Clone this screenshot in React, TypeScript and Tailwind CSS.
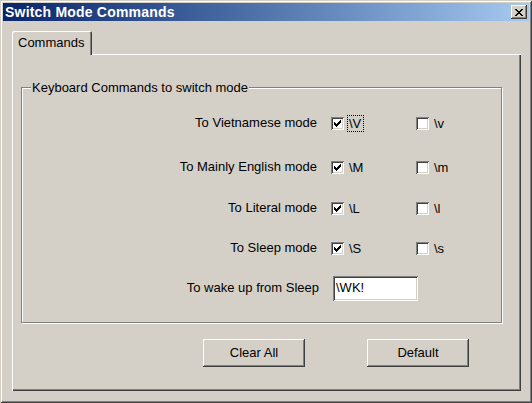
const xPixels: [number, number, number][] = [
  [0, 0, 2], [6, 0, 2],
  [1, 1, 2], [5, 1, 2],
  [2, 2, 4],
  [3, 3, 2],
  [2, 4, 4],
  [1, 5, 2], [5, 5, 2],
  [0, 6, 2], [6, 6, 2],
];

function CloseButton() {
  return (
    <div className="flex h-[14px] w-[16px] items-center justify-center bg-[#d4d0c8] shadow-[inset_-1px_-1px_0_#404040,inset_1px_1px_0_#fff,inset_-2px_-2px_0_#808080]">
      <svg width="8" height="7" viewBox="0 0 8 7" shapeRendering="crispEdges">
        {xPixels.map(([x, y, w], i) => (
          <rect key={i} x={x} y={y} width={w} height={1} fill="#000" />
        ))}
      </svg>
    </div>
  );
}

function Check({ checked }: { checked: boolean }) {
  return (
    <span className="relative inline-block h-[13px] w-[13px] shrink-0 bg-white shadow-[inset_1px_1px_0_#808080,inset_-1px_-1px_0_#fff,inset_2px_2px_0_#404040,inset_-2px_-2px_0_#d4d0c8]">
      {checked && (
        <svg className="absolute left-[2px] top-[2px]" width="9" height="9" viewBox="0 0 9 9" shapeRendering="crispEdges">
          <path d="M1 3h1v1h1v1h1v-1h1v-1h1v-1h1v-1h1v3h-1v1h-1v1h-1v1h-1v1h-1v-1h-1v-1h-1z" fill="#000" />
        </svg>
      )}
    </span>
  );
}

function Option({ label, checked, focused }: { label: string; checked: boolean; focused?: boolean }) {
  return (
    <div className="flex w-[85px] items-center">
      <Check checked={checked} />
      <span
        className={
          focused
            ? "ml-[3px] border border-dotted border-black pl-[1px] pr-[2px] leading-[15px]"
            : "ml-[3px] border border-transparent pl-[1px] pr-[2px] leading-[15px]"
        }
      >
        {label}
      </span>
    </div>
  );
}

function Button({ children }: { children: React.ReactNode }) {
  return (
    <div className="flex h-[28px] w-[102px] items-center justify-center bg-[#d4d0c8] shadow-[inset_-1px_-1px_0_#404040,inset_1px_1px_0_#fff,inset_-2px_-2px_0_#808080]">
      {children}
    </div>
  );
}

const rows = [
  { label: "To Vietnamese mode", on: "\\V", off: "\\v", gap: "mt-[15px]" },
  { label: "To Mainly English mode", on: "\\M", off: "\\m", gap: "mt-[4px]" },
  { label: "To Literal mode", on: "\\L", off: "\\l", gap: "mt-[1px]" },
  { label: "To Sleep mode", on: "\\S", off: "\\s", gap: "" },
];

export default function App() {
  return (
    <div className="h-[403px] w-[532px] bg-[#d4d0c8] p-[3px] font-['Liberation_Sans',Arial,sans-serif] text-[13px] text-black shadow-[inset_1px_1px_0_#d4d0c8,inset_-1px_-1px_0_#404040,inset_2px_2px_0_#fff,inset_-2px_-2px_0_#808080]">
      {/* Title bar */}
      <div className="flex h-[18px] items-center justify-between bg-gradient-to-r from-[#0a246a] to-[#a6caf0] pl-[2px] pr-[2px]">
        <span className="text-[14px] font-bold leading-[18px] tracking-[0.2px] text-white">Switch Mode Commands</span>
        <CloseButton />
      </div>

      {/* Body */}
      <div className="ml-[9px] mt-[10px]">
        {/* Tab strip */}
        <div className="relative z-10 -mb-[1px] flex h-[24px] w-[80px] items-center rounded-t-[2px] bg-[#d4d0c8] pl-[6px] shadow-[inset_1px_1px_0_#fff,inset_-1px_0_0_#404040,inset_-2px_0_0_#808080]">
          Commands
        </div>

        {/* Tab panel */}
        <div className="h-[337px] w-[509px] pl-[1px] pt-[1px] shadow-[inset_1px_1px_0_#fff,inset_-1px_-1px_0_#404040,inset_-2px_-2px_0_#808080]">
          {/* Group box */}
          <div className="relative ml-[8px] mt-[32px] h-[236px] w-[481px] border border-[#808080] shadow-[inset_1px_1px_0_#fff,1px_1px_0_#fff]">
            <span className="absolute -top-[8px] left-[9px] bg-[#d4d0c8] px-[1px] leading-[15px]">
              Keyboard Commands to switch mode
            </span>

            {rows.map((r) => (
              <div key={r.label} className={`flex h-[40px] items-center ${r.gap}`}>
                <div className="w-[297px] text-right">{r.label}</div>
                <div className="ml-[14px] flex items-center">
                  <Option label={r.on} checked focused={r.on === "\\V"} />
                  <Option label={r.off} checked={false} />
                </div>
              </div>
            ))}

            <div className="flex h-[40px] items-center">
              <div className="w-[297px] text-right">To wake up from Sleep</div>
              <div className="ml-[14px] flex h-[25px] w-[85px] items-center bg-white pl-[3px] shadow-[inset_1px_1px_0_#808080,inset_-1px_-1px_0_#fff,inset_2px_2px_0_#404040,inset_-2px_-2px_0_#d4d0c8]">
                \WK!
              </div>
            </div>
          </div>

          {/* Buttons */}
          <div className="ml-[190px] mt-[16px] flex gap-[62px]">
            <Button>Clear All</Button>
            <Button>Default</Button>
          </div>
        </div>
      </div>
    </div>
  );
}
